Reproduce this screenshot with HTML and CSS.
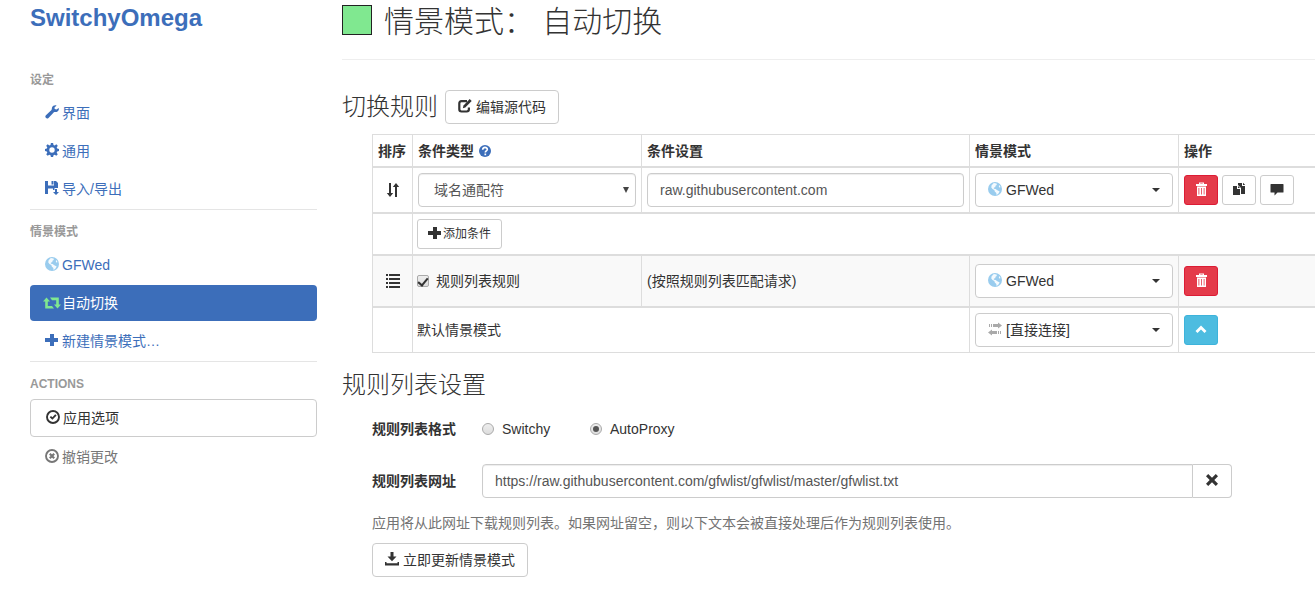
FILE: index.html
```html
<!DOCTYPE html>
<html lang="zh-CN">
<head>
<meta charset="utf-8">
<title>SwitchyOmega</title>
<link rel="stylesheet" href="styles.css">
</head>
<body>
<svg class="sprite" aria-hidden="true">
  <symbol id="wrench" viewBox="0 0 14 14"><path d="M13.7 3 11.5 4.500 9.700 3.900 9.500 2.400 11.600.5C9.800-.1 7.700.6 7.100 2.300 6.700 3.300 7 4.200 6.500 4.900L.9 10.300C-.8 12 1.600 14.700 3.500 13L8.900 7.300C9.600 6.800 10.600 7.200 11.600 6.900 13.300 6.300 14.200 4.600 13.700 3Z"/></symbol>
  <symbol id="gear" viewBox="0 0 14 14"><path fill-rule="evenodd" d="M5.900 0h2.200l.4 1.900 1.200.5L11.300 1.300l1.500 1.500-1.100 1.600.5 1.200 1.800.4v2.100l-1.800.4-.5 1.200 1.100 1.600-1.500 1.500-1.600-1.100-1.200.5-.4 1.800H5.900l-.4-1.800-1.200-.5-1.600 1.100-1.500-1.500 1.100-1.600-.5-1.200L0 8.100V6l1.800-.4.5-1.200-1.100-1.600 1.500-1.500 1.600 1.100 1.200-.5ZM7 4.300a2.700 2.700 0 1 0 0 5.400 2.700 2.700 0 0 0 0-5.400Z"/></symbol>
  <symbol id="save" viewBox="0 0 14 14"><path d="M0 0h3v4.500h6V0h2l2 2v5H9.500v2H8v-1.500H3V13H0ZM6.500 0H8.500V3.500H6.500ZM10 8h2v3h2l-3 3-3-3h2Z"/></symbol>
  <symbol id="globe" viewBox="0 0 14 14"><circle cx="7" cy="7" r="7"/><path fill="#fff" opacity=".9" d="M5.800.9 8.600 1.500 8.800 3 7.500 3.800 7.300 5 5.800 5.800 5.900 6.700 7.600 7 9.300 8.300 11.700 9.500 10.300 11.800 8.600 13 8.300 11 6.800 9.600 6.300 8 4.500 7 3.300 5.500 3.500 3.500 4.600 2.200ZM11 3l1.300 1.300-.2 1.500-1.200-.9Z"/></symbol>
  <symbol id="retweet" viewBox="0 0 18 14"><path d="M3.500 1.500 7 5.500H4.800V10H9l2 2.500H2.200V5.500H0ZM7 1.500h8.800v7H18L14.500 12.500 11 8.500h2.200V4.200H9Z"/></symbol>
  <symbol id="plus" viewBox="0 0 14 14"><path d="M5 1h4v4h4v4H9v4H5V9H0V5h5Z"/></symbol>
  <symbol id="ok" viewBox="0 0 14 14"><circle cx="7" cy="7" r="6" fill="none" stroke="currentColor" stroke-width="1.900"/><path d="m3.700 7.200 1.300-1.300L6.400 7.200 9.200 4.200l1.400 1.300-4.200 4.300Z"/></symbol>
  <symbol id="cancel" viewBox="0 0 14 14"><circle cx="7" cy="7" r="6" fill="none" stroke="currentColor" stroke-width="1.900"/><path d="m4.800 4.800 4.400 4.400m0-4.400L4.800 9.200" stroke="currentColor" stroke-width="2.200"/></symbol>
  <symbol id="edit" viewBox="0 0 14 14"><path d="M9 2.200H3.500Q1.300 2.200 1.300 4.400v5.900q0 2.200 2.200 2.200h5.200q2.200 0 2.200-2.200V8.500" fill="none" stroke="currentColor" stroke-width="2.200"/><path d="m11.700 0 2 2L7.300 8.500 4.800 9.200 5.500 6.500Z"/></symbol>
  <symbol id="question" viewBox="0 0 14 14"><circle cx="7" cy="7" r="6"/><path d="M4.700 5.700c0-3.100 4.700-2.800 4.600-.2C9.200 7 7.400 6.900 7.300 8.500M7.300 9.500v1.800" fill="none" stroke="#fff" stroke-width="1.700"/></symbol>
  <symbol id="sort" viewBox="0 0 14 14"><path d="M3 0h2v10h2.200L4 14 .8 10H3ZM10 0l3.200 4H11v10H9V4H6.800Z"/></symbol>
  <symbol id="list" viewBox="0 0 14 14"><path d="M0 0h2v2H0Zm3 0h11v2H3ZM0 4h2v2H0Zm3 0h11v2H3ZM0 8h2v2H0Zm3 0h11v2H3Zm-3 4h2v2H0Zm3 0h11v2H3Z"/></symbol>
  <symbol id="trash" viewBox="0 0 14 14"><path fill-rule="evenodd" d="M5 2V.5h5V2h3v2H2V2Zm1.300 0h2.400v-.5H6.300ZM3 4.500h9V14H3ZM4.500 6v6.500h.8V6Zm2.600 0v6.500h.8V6Zm2.600 0v6.500h.8V6Z"/></symbol>
  <symbol id="copy" viewBox="0 0 14 14"><path d="M1 4h4v3h3v6H1Zm5-3h4v3h3v8H9V6L6 3Zm5-.2L13.200 3H11ZM6 4l2 2H6Z"/></symbol>
  <symbol id="comment" viewBox="0 0 14 14"><path d="M1 2h12q.5 0 .5.500v7.500q0 .5-.5.500H7.500l-3 3v-3H1q-.5 0-.5-.5V2.500Q.5 2 1 2Z"/></symbol>
  <symbol id="transfer" viewBox="0 0 14 14"><path d="M1 2h1v3H1Zm2 0h1v3H3Zm2 0h5V.5l4 3L10 6.500V5H5ZM4 7.500V9h5v3H4v1.500l-4-3ZM10 9h1v3h-1Zm2 0h1v3h-1Z"/></symbol>
  <symbol id="chevron" viewBox="0 0 14 14"><path d="M7 3.500 12.500 9l-2 2L7 7.500 3.500 11l-2-2Z"/></symbol>
  <symbol id="remove" viewBox="0 0 14 14"><path d="m3.200 1 3.800 3.700L10.800 1 13 3.200 9.300 7l3.700 3.800-2.200 2.200L7 9.300 3.200 13 1 10.800 4.700 7 1 3.200Z"/></symbol>
  <symbol id="save-down" viewBox="0 0 14 14"><path d="M5.500 0h3v4.500h3L7 9.200 2.500 4.500h3ZM0 10h1.500v1.200h11V10H14v3.500H0Z"/></symbol>
</svg>

<nav class="sidebar">
  <h1 class="brand">SwitchyOmega</h1>
  <h2 class="nav-label">设定</h2>
  <ul class="nav-list">
    <li><a class="nav-item" href="#ui"><svg class="icon"><use href="#wrench"/></svg>界面</a></li>
    <li><a class="nav-item" href="#general"><svg class="icon"><use href="#gear"/></svg>通用</a></li>
    <li><a class="nav-item" href="#io"><svg class="icon"><use href="#save"/></svg>导入/导出</a></li>
  </ul>
  <h2 class="nav-label ruled">情景模式</h2>
  <ul class="nav-list">
    <li><a class="nav-item" href="#gfwed"><svg class="icon globe"><use href="#globe"/></svg>GFWed</a></li>
    <li><a class="nav-item active" href="#auto"><svg class="icon retweet"><use href="#retweet"/></svg>自动切换</a></li>
    <li><a class="nav-item" href="#new"><svg class="icon"><use href="#plus"/></svg>新建情景模式…</a></li>
  </ul>
  <h2 class="nav-label ruled">ACTIONS</h2>
  <ul class="nav-list">
    <li><button class="nav-item apply" type="button"><svg class="icon"><use href="#ok"/></svg>应用选项</button></li>
    <li><button class="nav-item revert" type="button"><svg class="icon"><use href="#cancel"/></svg>撤销更改</button></li>
  </ul>
</nav>

<main class="content">
  <header class="page-header">
    <button class="swatch" type="button" aria-label="颜色"></button>
    <h1 class="page-title">情景模式： 自动切换</h1>
  </header>

  <section>
    <div class="section-head">
      <h2 class="section-title">切换规则</h2>
      <button class="btn" type="button"><svg class="icon"><use href="#edit"/></svg>编辑源代码</button>
    </div>
    <table class="rules">
      <colgroup><col class="c-sort"><col class="c-type"><col><col class="c-profile"><col class="c-actions"></colgroup>
      <thead>
        <tr><th>排序</th><th>条件类型 <a class="help" href="#help" aria-label="帮助"><svg class="icon"><use href="#question"/></svg></a></th><th>条件设置</th><th>情景模式</th><th>操作</th></tr>
      </thead>
      <tbody>
        <tr class="r-rule">
          <td class="center"><svg class="icon"><use href="#sort"/></svg></td>
          <td><div class="select-wrap"><select class="field" aria-label="条件类型"><option>域名通配符</option></select><svg class="select-arrow" viewBox="0 0 6 6"><path d="M0 0h6L3 6Z"/></svg></div></td>
          <td><input class="field" type="text" value="raw.githubusercontent.com" aria-label="条件设置"></td>
          <td><button class="btn dropdown" type="button"><svg class="icon globe"><use href="#globe"/></svg>GFWed<span class="caret"></span></button></td>
          <td><div class="actions">
            <button class="btn small danger" type="button" aria-label="删除"><svg class="icon"><use href="#trash"/></svg></button>
            <button class="btn small" type="button" aria-label="复制"><svg class="icon"><use href="#copy"/></svg></button>
            <button class="btn small" type="button" aria-label="备注"><svg class="icon"><use href="#comment"/></svg></button>
          </div></td>
        </tr>
        <tr class="r-add">
          <td></td>
          <td class="tight" colspan="4"><button class="btn small add" type="button"><svg class="icon"><use href="#plus"/></svg>添加条件</button></td>
        </tr>
        <tr class="r-list">
          <td class="center"><svg class="icon"><use href="#list"/></svg></td>
          <td class="tight"><label class="check"><input type="checkbox" checked>规则列表规则</label></td>
          <td>(按照规则列表匹配请求)</td>
          <td><button class="btn dropdown" type="button"><svg class="icon globe"><use href="#globe"/></svg>GFWed<span class="caret"></span></button></td>
          <td><button class="btn small danger" type="button" aria-label="删除"><svg class="icon"><use href="#trash"/></svg></button></td>
        </tr>
        <tr class="r-default">
          <td></td>
          <td class="tight" colspan="2">默认情景模式</td>
          <td><button class="btn dropdown" type="button"><svg class="icon direct"><use href="#transfer"/></svg>[直接连接]<span class="caret"></span></button></td>
          <td><button class="btn small info" type="button" aria-label="上移"><svg class="icon"><use href="#chevron"/></svg></button></td>
        </tr>
      </tbody>
    </table>
  </section>

  <section>
    <h2 class="section-title list-title">规则列表设置</h2>
    <form class="list-form">
      <div class="form-row formats" role="radiogroup" aria-labelledby="fmt">
        <span class="form-label" id="fmt">规则列表格式</span>
        <label class="radio"><input type="radio" name="format">Switchy</label>
        <label class="radio"><input type="radio" name="format" checked>AutoProxy</label>
      </div>
      <div class="form-row">
        <label class="form-label" for="url">规则列表网址</label>
        <div class="input-group">
          <input class="field" id="url" type="text" value="https://raw.githubusercontent.com/gfwlist/gfwlist/master/gfwlist.txt">
          <button class="btn clear" type="button" aria-label="清除"><svg class="icon"><use href="#remove"/></svg></button>
        </div>
      </div>
      <p class="hint">应用将从此网址下载规则列表。如果网址留空，则以下文本会被直接处理后作为规则列表使用。</p>
      <button class="btn" type="button"><svg class="icon"><use href="#save-down"/></svg>立即更新情景模式</button>
    </form>
  </section>
</main>
</body>
</html>
```
FILE: styles.css
```css
* { box-sizing: border-box; }

body {
  margin: 0;
  display: flex;
  gap: 25px;
  padding-left: 30px;
  background: #fff;
  color: #333;
  font: 14px/20px "Liberation Sans", "Noto Sans CJK SC", sans-serif;
}

h1, h2, p, ul { margin: 0; padding: 0; }
ul { list-style: none; }
button, input, select { font: inherit; color: inherit; margin: 0; }

.sprite { position: absolute; width: 0; height: 0; }
.icon { width: 14px; height: 14px; flex: none; margin-bottom: 2px; fill: currentColor; vertical-align: middle; }
.globe { color: #99ccee; }
.direct { color: #aaa; }

/* Sidebar */
.sidebar { flex: 0 0 287px; }
.brand { padding-bottom: 22px; color: #3c6eba; font-size: 24px; line-height: 36px; font-weight: bold; }
.nav-label { padding: 12px 0 5px; color: #999; font-size: 12px; line-height: 20px; font-weight: bold; }
.nav-label.ruled { margin-top: 2px; border-top: 1px solid #e5e5e5; }
.nav-list { display: flex; flex-direction: column; gap: 2px; }
.nav-item {
  display: flex;
  align-items: center;
  gap: 3px;
  width: 100%;
  padding: 8px 15px;
  border: 0;
  border-radius: 4px;
  background: none;
  color: #3c6eba;
  text-align: left;
  text-decoration: none;
}
.nav-item.active { background: #3c6eba; color: #fff; }
.nav-item.apply { border: 1px solid #ccc; background: #fff; color: #333; }
.nav-item.revert { color: #777; }
.retweet { width: 18px; margin: 0 -2px; color: #80e890; }

/* Content */
.content { flex: 1; min-width: 0; }
.page-header { display: flex; gap: 12px; padding: 5px 0 20px; border-bottom: 1px solid #eee; }
.swatch { width: 30px; height: 30px; padding: 0; border: 1px solid #222; background: #80e890; }
.page-title { font-size: 30px; line-height: 34px; font-weight: 300; }
.section-head { display: flex; align-items: center; gap: 7px; padding: 30px 0 10px; }
.section-title { font-size: 24px; line-height: 30px; font-weight: 300; }

.btn {
  display: inline-flex;
  align-items: center;
  justify-content: center;
  gap: 4px;
  padding: 6px 12px;
  border: 1px solid #ccc;
  border-radius: 4px;
  background: #fff;
  color: #333;
  vertical-align: middle;
}
.btn.small { width: 34px; height: 30px; padding: 0; border-radius: 3px; }
.btn.add { width: auto; padding: 0 10px; gap: 1px; font-size: 12px; }
.btn.danger { background: #e43b4a; border-color: #dc1c35; color: #fff; }
.btn.info { background: #4dbce0; border-color: #3db3db; color: #fff; }
.btn.dropdown { width: 100%; justify-content: flex-start; }
.caret { margin-left: auto; border: 4px solid transparent; border-top-color: #333; border-bottom: 0; }

.field {
  width: 100%;
  height: 34px;
  padding: 6px 12px;
  border: 1px solid #ccc;
  border-radius: 4px;
  background: #fff;
  color: #555;
  box-shadow: inset 0 1px 1px rgba(0, 0, 0, .075);
}
.select-wrap { position: relative; }
.select-wrap .field { appearance: none; padding-left: 15px; }
.select-arrow { position: absolute; right: 7px; top: 14px; width: 6px; height: 6px; fill: #444; }

.rules { width: calc(100% - 30px); margin-left: 30px; border-spacing: 0; table-layout: fixed; }
.c-sort { width: 40px; }
.c-type { width: 229px; }
.c-profile { width: 209px; }
.c-actions { width: 137px; }
.rules th, .rules td { padding: 0 5px; border-left: 1px solid #ddd; text-align: left; vertical-align: middle; }
.rules th { height: 32px; border-top: 1px solid #ddd; white-space: nowrap; }
.rules td { border-top: 2px solid #ddd; }
.rules td.center { text-align: center; }
.rules td.tight { padding-left: 4px; }
.r-rule { height: 46px; }
.r-add { height: 42px; }
.r-list { height: 52px; background: #f9f9f9; }
.r-default { height: 47px; }
.r-default td { border-bottom: 1px solid #ddd; }
.help { color: #3c6eba; }
.actions { display: flex; gap: 4px; }

.check, .radio { display: flex; align-items: center; gap: 7px; }
input[type="checkbox"], input[type="radio"] {
  appearance: none;
  display: grid;
  place-items: center;
  flex: none;
  width: 12px;
  height: 12px;
  border: 1px solid #aaa;
  background: linear-gradient(#eee, #ddd);
}
input[type="checkbox"] { border-radius: 2px; }
input[type="radio"] { border-radius: 50%; }
input[type="checkbox"]:checked::after {
  content: "";
  width: 4px;
  height: 8px;
  margin-bottom: 2px;
  border: solid #333;
  border-width: 0 2px 2px 0;
  transform: rotate(40deg);
}
input[type="radio"]:checked::after { content: ""; width: 6px; height: 6px; border-radius: 50%; background: #555; }

/* Rule list settings */
.list-title { margin-top: 17px; }
.list-form { max-width: 890px; padding: 19px 0 18px 30px; }
.form-row { display: flex; align-items: center; }
.form-label { flex: 0 0 110px; font-weight: bold; }
.formats { margin-bottom: 25px; }
.radio { min-width: 108px; gap: 8px; }
.input-group { display: flex; flex: 1; }
.input-group .field { flex: 1; min-width: 0; border-radius: 4px 0 0 4px; }
.clear { border-left: 0; border-radius: 0 4px 4px 0; }
.hint { margin: 15px 0 10px; color: #737373; }
```
